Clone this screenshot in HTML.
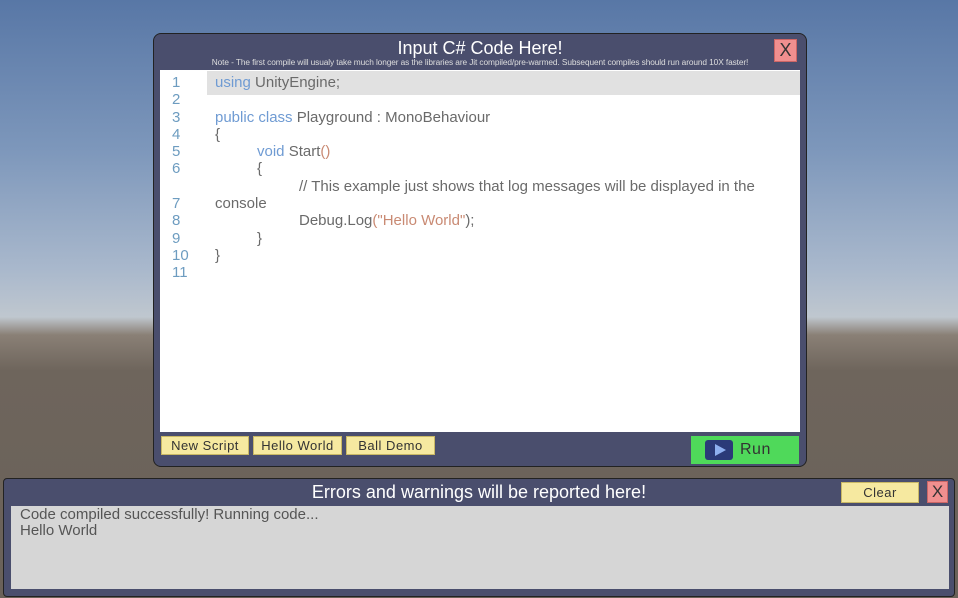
<!DOCTYPE html><html><head><style>
body{margin:0;width:958px;height:598px;overflow:hidden;position:relative;font-family:"Liberation Sans",sans-serif;background:linear-gradient(#5877a6 0%,#7d97bb 25%,#a9b8cc 45%,#bfc7cf 53%,#8a8076 56%,#6e655c 62%,#6a6159 100%)}
.win{position:absolute;left:153px;top:33px;width:652px;height:432px;background:#4a4e6d;border:1px solid #222;border-radius:8px}
.t{position:absolute;color:#fff;text-align:center;width:100%}
.x{position:absolute;background:#f08f8f;color:#333;text-align:center;border:1px solid #c66}
.ed{position:absolute;left:6px;top:36px;width:640px;height:362px;background:#fff}
.ln{position:absolute;left:12px;color:#6d9cc0;font-size:15px}
.cd{position:absolute;left:55px;color:#6a6a6a;font-size:15px;white-space:pre}
.k{color:#6f9bd3}.s{color:#c98a73}
.i{display:inline-block;width:42px}
.b{position:absolute;top:402px;height:17px;background:#f6e9a0;border:1px solid #c9b865;font-size:13px;color:#333;text-align:center;line-height:17px;letter-spacing:.5px}
</style></head><body>
<div class="win">
<div class="t" style="top:4px;font-size:18px">Input C# Code Here!</div>
<div class="t" style="top:24px;font-size:8px;color:#ddd;letter-spacing:-0.1px;transform:scaleX(1.04)">Note - The first compile will usualy take much longer as the libraries are Jit compiled/pre-warmed. Subsequent compiles should run around 10X faster!</div>
<div class="x" style="left:620px;top:5px;width:21px;height:21px;font-size:18px;line-height:21px">X</div>
<div class="ed">
<div style="position:absolute;left:47px;top:1px;width:593px;height:24px;background:#e1e1e1"></div>
<div class="ln" style="top:4px;line-height:17.3px">1<br>2<br>3<br>4<br>5<br>6<br><br>7<br>8<br>9<br>10<br>11</div>
<div class="cd" style="top:4px;line-height:17.3px"><span class="k">using</span> UnityEngine;

<span class="k">public class</span> Playground : MonoBehaviour
{
<span class="i"></span><span class="k">void</span> Start<span class="s">()</span>
<span class="i"></span>{
<span class="i"></span><span class="i"></span>// This example just shows that log messages will be displayed in the
console
<span class="i"></span><span class="i"></span>Debug.Log<span class="s">("Hello World"</span>);
<span class="i"></span>}
}</div>
</div>
<div class="b" style="left:7px;width:86px">New Script</div>
<div class="b" style="left:99px;width:87px">Hello World</div>
<div class="b" style="left:192px;width:87px">Ball Demo</div>
<div style="position:absolute;left:537px;top:402px;width:108px;height:28px;background:#4fd95a">
<div style="position:absolute;left:14px;top:4px;width:28px;height:20px;background:#2b3a78;border-radius:3px"><div style="position:absolute;left:10px;top:4px;border-left:11px solid #8fb0f0;border-top:6px solid transparent;border-bottom:6px solid transparent"></div></div>
<div style="position:absolute;left:49px;top:5px;font-size:16px;color:#333;letter-spacing:.5px">Run</div></div>
</div>
<div style="position:absolute;left:3px;top:478px;width:950px;height:117px;background:#4a4e6d;border:1px solid #222;border-radius:4px">
<div class="t" style="top:3px;font-size:18px">Errors and warnings will be reported here!</div>
<div style="position:absolute;left:837px;top:3px;width:76px;height:19px;background:#f6e9a0;border:1px solid #c9b865;font-size:13px;color:#333;text-align:center;line-height:19px;letter-spacing:.5px">Clear</div>
<div class="x" style="left:923px;top:2px;width:19px;height:20px;font-size:17px;line-height:20px">X</div>
<div style="position:absolute;left:7px;top:27px;width:938px;height:83px;background:#d6d6d6;color:#555;font-size:15px;line-height:16px;padding:1px 9px;box-sizing:border-box">Code compiled successfully! Running code...<br>Hello World</div>
</div>
</body></html>
